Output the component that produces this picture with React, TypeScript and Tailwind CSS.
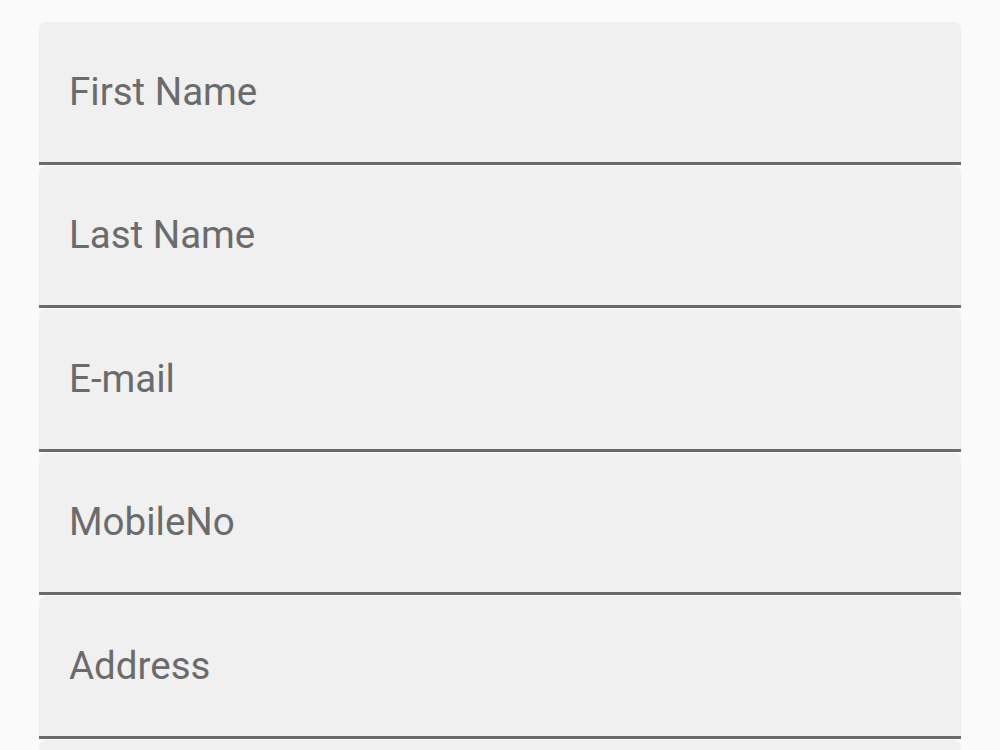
const fields = ["First Name", "Last Name", "E-mail", "MobileNo", "Address", ""];

export default function App() {
  return (
    <div
      className="h-screen overflow-hidden bg-[#fafafa] px-[39px] pt-[22px]"
      style={{ fontFamily: "Roboto, 'Liberation Sans', sans-serif" }}
    >
      <div className="flex flex-col gap-[1px]">
        {fields.map((label, i) => (
          <div
            key={i}
            className="flex h-[142.5px] shrink-0 items-center rounded-t-[7px] border-b-[3px] border-[#6a6a6a] bg-[#f0f0f0] pl-[30px]"
          >
            <span className="text-[38.5px] text-[#6b6b6b]">{label}</span>
          </div>
        ))}
      </div>
    </div>
  );
}
